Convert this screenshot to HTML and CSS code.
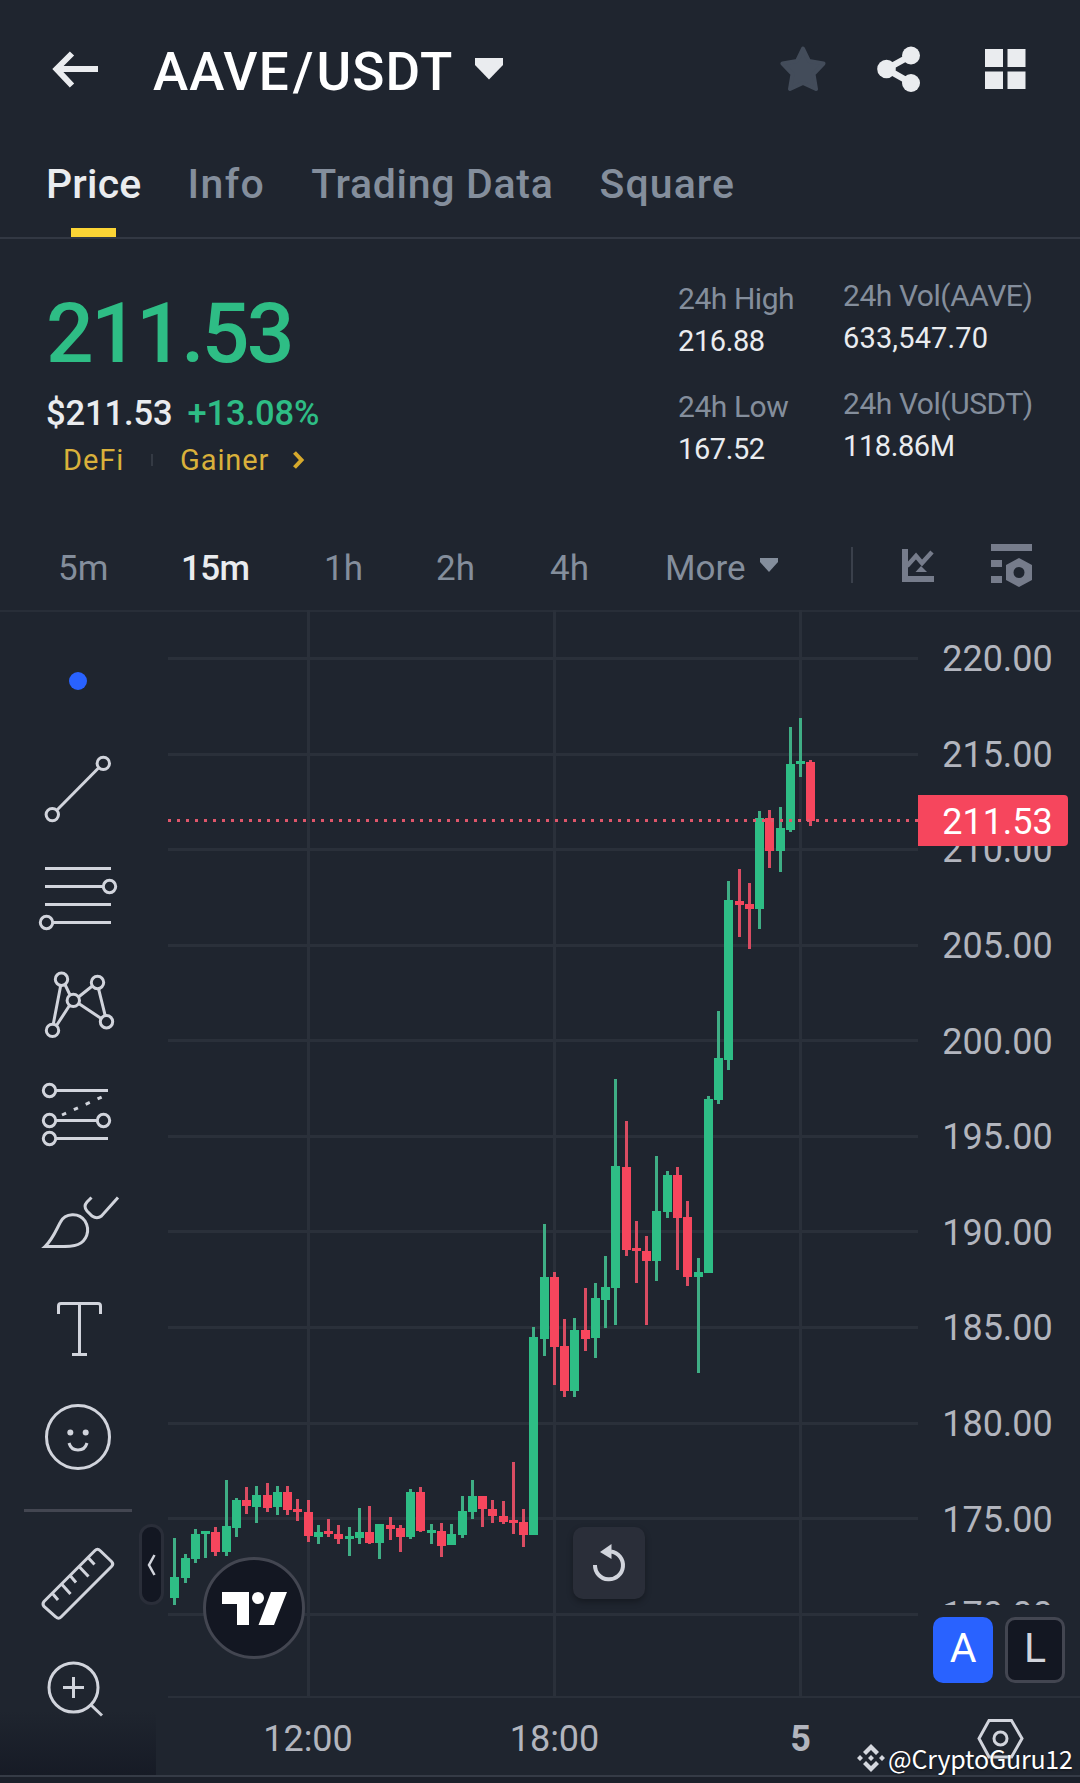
FILE: index.html
```html
<!DOCTYPE html>
<html lang="en">
<head>
    <meta charset="UTF-8">
    <meta name="viewport" content="width=device-width, initial-scale=1.0">
    <title>AAVE/USDT</title>
    <link rel="stylesheet" href="styles.css">
</head>
<body>
    <header class="header">
        <svg class="back" width="48" height="40" viewBox="51 49 48 40"><path d="M98 69H57M72 53.500L56.500 69L72 85.500" fill="none" stroke="#eaecef" stroke-width="6"/></svg>
        <h1 class="pair">AAVE<span>/</span>USDT</h1>
        <svg class="pair-arrow" width="28" height="22" viewBox="0 0 28 22"><path d="M0 0H28V7L14 21.500L0 7Z" fill="#eaecef"/></svg>
        <div class="header-icons">
            <svg width="46" height="46" viewBox="0 0 46 46"><path d="M23 2.500L29 15L43.500 17.500L33.500 28L36 43L23 37L10 43L12.500 28L2.500 17.500L17 15Z" fill="#434c5a" stroke="#434c5a" stroke-width="4" stroke-linejoin="round"/></svg>
            <svg width="44" height="48" viewBox="877 45 44 48"><path d="M911 55.500L886.500 69L911 83" fill="none" stroke="#eaecef" stroke-width="6.500"/><g fill="#eaecef"><circle cx="911" cy="55.500" r="9"/><circle cx="886.500" cy="69" r="9.300"/><circle cx="911" cy="83" r="9"/></g></svg>
            <svg width="41" height="40" viewBox="0 0 41 40" fill="#eaecef"><path d="M0 0H18V18H0ZM22.500 0H40.500V18H22.500ZM0 22.500H18V40H0ZM22.500 22.500H40.500V40H22.500Z"/></svg>
        </div>
    </header>

    <nav class="tabs">
        <a class="tab active">Price</a>
        <a class="tab tab-info">Info</a>
        <a class="tab tab-data">Trading Data</a>
        <a class="tab tab-square">Square</a>
    </nav>

    <section class="summary">
        <div class="quote">
            <div class="last-price">211.53</div>
            <div class="change"><span class="usd">$211.53</span><span class="percent">+13.08%</span></div>
            <div class="tags">
                <span>DeFi</span>
                <i></i>
                <span>Gainer</span>
                <svg width="14" height="20" viewBox="0 0 14 20"><path d="M2.500 2.500L9.500 10L2.500 17.500" fill="none" stroke="#d6a92c" stroke-width="4"/></svg>
            </div>
        </div>
        <dl class="stats stats-price">
            <dt>24h High</dt>
            <dd>216.88</dd>
            <dt>24h Low</dt>
            <dd>167.52</dd>
        </dl>
        <dl class="stats">
            <dt>24h Vol(AAVE)</dt>
            <dd class="volume">633,547.70</dd>
            <dt>24h Vol(USDT)</dt>
            <dd>118.86M</dd>
        </dl>
    </section>

    <nav class="intervals">
        <span>5m</span>
        <span class="selected">15m</span>
        <span>1h</span>
        <span>2h</span>
        <span>4h</span>
        <span>More</span>
        <svg width="18" height="14" viewBox="0 0 18 14"><path d="M0 0H18V4L9 14L0 4Z" fill="#848e9c"/></svg>
        <i></i>
        <svg width="32" height="33" viewBox="0 0 32 33"><path d="M3 0V30H32" fill="none" stroke="#767c8b" stroke-width="6"/><path d="M5 17L14 7L20 14L30 3" fill="none" stroke="#767c8b" stroke-width="4.500"/><path d="M13.500 23L19 17L25 23Z" fill="#767c8b"/></svg>
        <svg width="41" height="43" viewBox="0 0 41 43" fill="#767c8b"><path d="M0 0H41V7H0ZM0 16H11V23H0ZM0 32H11V39H0Z"/><path fill-rule="evenodd" d="M28 14L41 21V36L28 43L15 36V21ZM28 23A5.500 5.500 0 1 0 28 34A5.500 5.500 0 1 0 28 23Z"/></svg>
    </nav>

    <main class="chart">
        <aside class="tools">
            <svg viewBox="24 627 108 108"><circle cx="78" cy="681" r="9" fill="#2962ff" stroke="none"/></svg>
            <svg viewBox="24 735 108 108"><path d="M57 810L98.500 768"/><circle cx="52.300" cy="814.600" r="6.200"/><circle cx="103.300" cy="763.400" r="6.200"/></svg>
            <svg viewBox="24 843 108 108"><path d="M45 868.500H111M45 886.500H103M45 904.500H111M53 922.500H111"/><circle cx="109.500" cy="886.500" r="6.200"/><circle cx="46.500" cy="922.500" r="6.200"/></svg>
            <svg viewBox="24 951 108 108"><path d="M60.700 985.500L53.300 1024M56.500 1025.500L69.500 1005.500M65 984.500L70 995M78.500 997L92.300 986M98.500 988.700L105.200 1015.700M78.700 1003.500L101.200 1018.500"/><circle cx="61.500" cy="979.300" r="6.200"/><circle cx="97.500" cy="982.500" r="6.200"/><circle cx="73.300" cy="1000.400" r="6.200"/><circle cx="52.500" cy="1030.400" r="6.200"/><circle cx="106.500" cy="1021.800" r="6.200"/></svg>
            <svg viewBox="24 1059 108 108"><path d="M56 1090.500H108M56 1120.500H97M56 1138.500H108"/><path d="M62 1115L104 1096" stroke-dasharray="4.500 8.500"/><circle cx="49.500" cy="1090.500" r="6.200"/><circle cx="49.500" cy="1120.500" r="6.200"/><circle cx="103.500" cy="1120.500" r="6.200"/><circle cx="49.500" cy="1138.500" r="6.200"/></svg>
            <svg viewBox="24 1167 108 108"><path d="M45 1246.500C53 1239 57 1228 60.500 1222C65 1213 79 1212 85 1221C91 1231 86 1241 78 1244.500C73 1247 66 1246.500 45 1246.500Z"/><path d="M91.500 1197.500L87 1202Q83 1206.500 87 1211L92 1216Q97 1219.500 101.500 1216L118 1197.500"/></svg>
            <svg viewBox="24 1275 108 108"><path d="M58.500 1314V1306Q58.500 1303.500 61 1303.500H98Q100.500 1303.500 100.500 1306V1314M79.500 1303.500V1354M72 1354.500H87"/></svg>
            <svg viewBox="24 1383 108 108"><circle cx="78" cy="1437" r="31.500"/><circle cx="70.300" cy="1432.500" r="3" fill="#d1d4dc" stroke="none"/><circle cx="85.700" cy="1432.500" r="3" fill="#d1d4dc" stroke="none"/><path d="M69 1443Q71 1450 78 1450Q85 1450 87 1443"/></svg>
            <hr>
            <svg viewBox="24 1530 108 108"><path d="M44 1601.500L95 1550.500Q97.500 1548 100 1550.500L111.500 1561.500Q114 1564 111.500 1566.500L61 1617Q58.500 1619.500 56 1617L44 1606.500Q42 1604 44 1601.500ZM52.500 1593.500L58 1600M62 1584.500L70.500 1594M70.500 1576L76 1582.500M79.500 1567L88.500 1576.500M88.500 1558L94.500 1564.500"/></svg>
            <svg viewBox="24 1638 108 108"><circle cx="73.500" cy="1687.500" r="24.500"/><path d="M91 1705L102 1715.500M63 1687.500H84M73.500 1677V1698"/></svg>
        </aside>

        <svg class="plot" width="924" height="1173" viewBox="156 610 924 1173">
            <defs>
                <clipPath id="axisClip"><rect x="918" y="610" width="162" height="995"/></clipPath>
            </defs>
            <g id="grid"></g>
            <g id="candles"></g>
            <line x1="168" y1="820.500" x2="918" y2="820.500" stroke="#e0566b" stroke-width="3" stroke-dasharray="3 6"/>
            <g id="prices" clip-path="url(#axisClip)"></g>
            <path d="M918 795H1064Q1068 795 1068 799V842Q1068 846 1064 846H918Z" fill="#f6465d"/>
            <text class="axis now" x="997.500" y="834">211.53</text>
            <text class="axis" x="308" y="1750.500">12:00</text>
            <text class="axis" x="554.500" y="1750.500">18:00</text>
            <text class="axis day" x="800.500" y="1750.500">5</text>
            <path d="M989 1720.500H1011.500L1022 1738.500L1011.500 1757H989L979 1738.500Z" fill="none" stroke="#d1d4dc" stroke-width="3"/>
            <circle cx="1000.500" cy="1738.500" r="6.500" fill="none" stroke="#d1d4dc" stroke-width="3"/>
        </svg>

        <div class="collapse"><svg width="9" height="22" viewBox="0 0 9 22"><path d="M7.500 1L2 11L7.500 21" fill="none" stroke="#d1d4dc" stroke-width="2.500"/></svg></div>
        <div class="tv-logo"><svg width="65" height="33" viewBox="0 0 65 33" fill="#fff"><path d="M0 0H27V33H15V12H0ZM49 0H65L52 33H36.500Z"/><circle cx="36" cy="6" r="6"/></svg></div>
        <div class="reset"><svg width="34" height="38" viewBox="0 0 34 38"><path d="M3 21A14 14 0 1 0 19 7.500" fill="none" stroke="#d1d4dc" stroke-width="4"/><path d="M8 8L19.500 0V15Z" fill="#d1d4dc"/></svg></div>
        <div class="scale-buttons"><b class="auto">A</b><b class="log">L</b></div>
        <div class="watermark">
            <svg width="28" height="28" viewBox="0 0 28 28" fill="#d5d8df"><path d="M14 0L22 8L19 11L14 6L9 11L6 8ZM14 28L22 20L19 17L14 22L9 17L6 20ZM14 11L17 14L14 17L11 14ZM3 11L6 14L3 17L0 14ZM25 11L28 14L25 17L22 14Z"/></svg>
            <span>@CryptoGuru12</span>
        </div>
    </main>
    <script src="chart.js"></script>
</body>
</html>
```
FILE: styles.css
```css
* {
    box-sizing: border-box;
}

body {
    margin: 0;
    width: 1080px;
    height: 1783px;
    overflow: hidden;
    background: #1f252f;
    color: #eaecef;
    font-family: Roboto, "Liberation Sans", sans-serif;
}

svg {
    display: block;
    flex: none;
}

.header {
    display: flex;
    align-items: center;
    height: 140px;
    padding: 0 54px 0 51px;
}

.pair {
    width: 299px;
    margin: 4px 0 0 54px;
    font-size: 53px;
    font-weight: 500;
    line-height: 62px;
    letter-spacing: 1.1px;
    color: #fff;
    white-space: nowrap;
}

.pair span {
    padding: 0 2px 0 3px;
}

.pair-arrow {
    margin-left: 23px;
}

.header-icons {
    display: flex;
    align-items: center;
    margin-left: auto;
}

.header-icons svg + svg {
    margin-left: 51px;
}

.header-icons svg:last-child {
    margin-left: 64px;
}

.header > svg,
.header-icons {
    margin-bottom: 2px;
}

.tabs {
    display: flex;
    gap: 46px;
    height: 99px;
    padding: 20px 46px 0;
    border-bottom: 2px solid #323843;
}

.tab {
    position: relative;
    font-size: 41px;
    font-weight: 500;
    line-height: 48px;
    color: #848e9c;
    white-space: nowrap;
}

.tab-info {
    letter-spacing: 1.4px;
}

.tab-data {
    letter-spacing: 0.7px;
}

.tab-square {
    letter-spacing: 1.1px;
}

.active {
    letter-spacing: 0.2px;
    color: #eaecef;
}

.active::after {
    content: "";
    position: absolute;
    left: 25px;
    bottom: 0;
    width: 45px;
    height: 9px;
    background: #fcd535;
}

.summary {
    display: flex;
    height: 291px;
}

.quote {
    width: 678px;
    padding: 46px 0 0 46px;
}

.last-price {
    font-size: 84px;
    font-weight: 500;
    line-height: 98px;
    letter-spacing: -2.7px;
    color: #2ebd85;
}

.change {
    display: flex;
    gap: 15px;
    margin-top: 10px;
    font-size: 34.5px;
    font-weight: 500;
    line-height: 40px;
    letter-spacing: -0.1px;
}

.percent {
    color: #2ebd85;
}

.tags {
    display: flex;
    align-items: center;
    padding-left: 17px;
    margin-top: 10px;
    font-size: 29px;
    line-height: 34px;
    letter-spacing: 0.9px;
    color: #d9b13b;
}

.tags i {
    width: 2px;
    height: 12px;
    margin: 0 27px;
    background: #343a44;
}

.tags svg {
    margin-left: 23px;
}

.stats {
    margin: 0;
    padding-top: 39px;
    white-space: nowrap;
}

.stats-price {
    width: 165px;
    padding-top: 42px;
}

.stats dt {
    font-size: 30px;
    line-height: 36px;
    letter-spacing: -0.45px;
    color: #848e9c;
}

.stats dd {
    margin: 6px 0 30px;
    font-size: 29px;
    line-height: 36px;
    letter-spacing: -0.4px;
}

.stats .volume {
    letter-spacing: 0.15px;
}

.intervals {
    display: grid;
    grid-template-columns: 124px 142px 112px 114px 115px 93px 91px 51px 89px 41px;
    align-items: center;
    height: 82px;
    padding: 0 0 10px 60px;
    font-size: 35px;
    line-height: 42px;
    color: #848e9c;
    border-bottom: 2px solid #282e38;
}

.intervals span {
    margin-left: -2px;
    padding-top: 7px;
}

.intervals .selected {
    margin-left: -3px;
    font-weight: 500;
    letter-spacing: -0.6px;
    color: #eaecef;
}

.intervals i {
    width: 2px;
    height: 36px;
    background: #3a404b;
}

.chart {
    position: relative;
    display: flex;
    height: 1173px;
    margin-top: -2px;
}

.tools {
    width: 156px;
    padding: 17px 24px 0;
}

.tools::after {
    content: "";
    position: absolute;
    left: 0;
    bottom: 6px;
    width: 156px;
    height: 66px;
    background: linear-gradient(rgba(19, 23, 34, 0), rgba(19, 23, 34, .75));
}

.chart::after {
    content: "";
    position: absolute;
    left: 0;
    bottom: 0;
    width: 1080px;
    height: 6px;
    background: #1b202a;
    border-top: 2px solid #353b46;
}

.tools svg {
    width: 108px;
    height: 108px;
    fill: none;
    stroke: #d1d4dc;
    stroke-width: 3;
}

.tools hr {
    height: 3px;
    margin: 18px 0;
    border: 0;
    background: #434651;
}

.axis {
    font-size: 36px;
    fill: #b2b5be;
    text-anchor: middle;
}

.now {
    fill: #fff;
}

.day {
    font-weight: 700;
}

/* controls floating over the chart */
.collapse,
.tv-logo,
.reset {
    position: absolute;
    display: flex;
    align-items: center;
    justify-content: center;
}

.collapse {
    left: 139px;
    top: 914px;
    width: 25px;
    height: 81px;
    background: #131722;
    border: 3px solid #2a2e39;
    border-radius: 12px;
}

.tv-logo {
    left: 203px;
    top: 947px;
    width: 102px;
    height: 102px;
    background: #131722;
    border: 3px solid #434651;
    border-radius: 50%;
}

.reset {
    left: 573px;
    top: 917px;
    width: 72px;
    height: 72px;
    background: #2a2e39;
    border-radius: 10px;
    box-shadow: 0 3px 6px rgba(0, 0, 0, .3);
}

.scale-buttons {
    position: absolute;
    left: 933px;
    top: 1007px;
    display: flex;
    gap: 12px;
}

.scale-buttons b {
    width: 60px;
    height: 66px;
    border-radius: 10px;
    font-size: 41px;
    font-weight: 400;
    line-height: 63px;
    text-align: center;
}

.auto {
    background: #2962ff;
    color: #fff;
}

.scale-buttons .log {
    background: #131722;
    border: 3px solid #434651;
    color: #d1d4dc;
    line-height: 57px;
}

.watermark {
    position: absolute;
    left: 857px;
    top: 1130px;
    display: flex;
    align-items: center;
    gap: 3px;
    z-index: 1;
    font-family: "Noto Sans CJK SC", "Noto Sans", sans-serif;
    font-size: 25px;
    line-height: 36px;
    letter-spacing: -0.2px;
    color: #fff;
    text-shadow: 0 1px 2px rgba(0, 0, 0, .5);
}
```
FILE: chart.js
```js
// direction, high, body top, body bottom, low
var candles = [
    ['g', 1538, 1577, 1598, 1605], ['g', 1554, 1558, 1578, 1583], ['g', 1529, 1534, 1559, 1563],
    ['g', 1531, 1531, 1534, 1558], ['r', 1527, 1532, 1552, 1556], ['g', 1480, 1526, 1552, 1556],
    ['g', 1498, 1500, 1528, 1537], ['r', 1487, 1500, 1506, 1514], ['g', 1486, 1495, 1507, 1523],
    ['r', 1483, 1495, 1508, 1512], ['g', 1486, 1492, 1507, 1515], ['r', 1486, 1492, 1510, 1515],
    ['r', 1499, 1509, 1512, 1521], ['r', 1500, 1512, 1536, 1542], ['g', 1525, 1532, 1537, 1544],
    ['r', 1519, 1531, 1534, 1537], ['r', 1525, 1534, 1539, 1544], ['g', 1527, 1536, 1539, 1556],
    ['g', 1508, 1532, 1538, 1544], ['r', 1506, 1532, 1543, 1544], ['g', 1524, 1524, 1543, 1559],
    ['r', 1517, 1525, 1529, 1540], ['r', 1525, 1528, 1537, 1552], ['g', 1489, 1492, 1537, 1539],
    ['r', 1487, 1492, 1531, 1532], ['g', 1524, 1530, 1533, 1544], ['r', 1523, 1531, 1546, 1557],
    ['g', 1524, 1534, 1545, 1545], ['g', 1496, 1511, 1535, 1538], ['g', 1480, 1496, 1512, 1519],
    ['r', 1496, 1496, 1509, 1527], ['r', 1500, 1509, 1516, 1523], ['r', 1501, 1516, 1522, 1524],
    ['r', 1462, 1520, 1523, 1534], ['r', 1509, 1522, 1535, 1547], ['g', 1327, 1337, 1535, 1535],
    ['g', 1224, 1277, 1339, 1356], ['r', 1272, 1277, 1347, 1385], ['r', 1319, 1346, 1391, 1397],
    ['g', 1318, 1330, 1391, 1397], ['r', 1288, 1330, 1339, 1351], ['g', 1283, 1298, 1338, 1358],
    ['g', 1256, 1287, 1300, 1328], ['g', 1079, 1166, 1288, 1325], ['r', 1121, 1167, 1250, 1256],
    ['r', 1221, 1248, 1251, 1283], ['r', 1236, 1251, 1261, 1325], ['g', 1156, 1211, 1261, 1281],
    ['g', 1171, 1175, 1212, 1218], ['r', 1167, 1175, 1218, 1270], ['r', 1201, 1217, 1277, 1286],
    ['g', 1258, 1272, 1277, 1373], ['g', 1096, 1099, 1273, 1273], ['g', 1011, 1058, 1100, 1104],
    ['g', 881, 900, 1060, 1070], ['r', 869, 901, 905, 937], ['r', 883, 904, 909, 949],
    ['g', 811, 818, 909, 929], ['r', 810, 818, 851, 868], ['g', 807, 828, 851, 872],
    ['g', 727, 764, 830, 832], ['g', 718, 761, 764, 777], ['r', 760, 762, 821, 826]
];

function rect(x, y, w, h, fill) {
    return '<rect x="' + x + '" y="' + y + '" width="' + w + '" height="' + h + '" fill="' + fill + '"/>';
}

var bars = '';
candles.forEach(function (c, i) {
    var x = 170 + Math.floor(10.26 * i + 0.75);
    bars += rect(x + 3, c[1], 3, c[4] - c[1], c[0] == 'g' ? '#3fae85' : '#d94c62');
    bars += rect(x, c[2], 9, c[3] - c[2], c[0] == 'g' ? '#2ebd85' : '#f6465d');
});
document.getElementById('candles').innerHTML = bars;

var grid = '';
var prices = '';
for (var i = 0; i <= 10; i++) {
    var y = 658.500 + i * 95.580;
    grid += rect(168, Math.round(y - 1.5), 750, 3, '#2a303a');
    prices += '<text class="axis" x="997.500" y="' + (y + 12.8) + '">' + (220 - i * 5) + '.00</text>';
}
[307, 553, 799].forEach(function (x) {
    grid += rect(x, 610, 3, 1087, '#2a303a');
});
grid += rect(168, 1696, 912, 2, '#2a303a');
document.getElementById('grid').innerHTML = grid;
document.getElementById('prices').innerHTML = prices;
```
